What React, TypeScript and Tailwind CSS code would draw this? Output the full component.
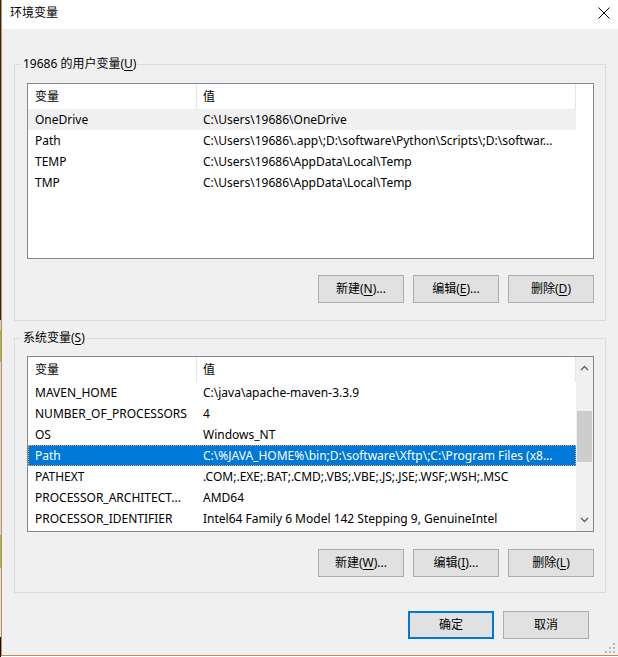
import React from "react";

type Row = { name: string; value: string };

const userRows: Row[] = [
  { name: "OneDrive", value: "C:\\Users\\19686\\OneDrive" },
  {
    name: "Path",
    value: "C:\\Users\\19686\\.app\\;D:\\software\\Python\\Scripts\\;D:\\softwar...",
  },
  { name: "TEMP", value: "C:\\Users\\19686\\AppData\\Local\\Temp" },
  { name: "TMP", value: "C:\\Users\\19686\\AppData\\Local\\Temp" },
];

const systemRows: Row[] = [
  { name: "MAVEN_HOME", value: "C:\\java\\apache-maven-3.3.9" },
  { name: "NUMBER_OF_PROCESSORS", value: "4" },
  { name: "OS", value: "Windows_NT" },
  {
    name: "Path",
    value: "C:\\%JAVA_HOME%\\bin;D:\\software\\Xftp\\;C:\\Program Files (x8...",
  },
  { name: "PATHEXT", value: ".COM;.EXE;.BAT;.CMD;.VBS;.VBE;.JS;.JSE;.WSF;.WSH;.MSC" },
  { name: "PROCESSOR_ARCHITECT...", value: "AMD64" },
  { name: "PROCESSOR_IDENTIFIER", value: "Intel64 Family 6 Model 142 Stepping 9, GenuineIntel" },
];

function Key({ k }: { k: string }) {
  return <span className="underline underline-offset-2">{k}</span>;
}

function WinButton({
  children,
  primary = false,
}: {
  children: React.ReactNode;
  primary?: boolean;
}) {
  return (
    <button
      className={
        "flex h-[28px] w-[86px] items-center justify-center bg-[#e1e1e1] text-[12px] text-black " +
        (primary ? "border-2 border-[#0078d7]" : "border border-[#adadad]")
      }
    >
      {children}
    </button>
  );
}

function Chevron({ up }: { up: boolean }) {
  return (
    <svg width="9" height="6" viewBox="0 0 9 6" className="block">
      <path
        d={up ? "M1 5 L4.5 1.5 L8 5" : "M1 1 L4.5 4.5 L8 1"}
        fill="none"
        stroke="#606060"
        strokeWidth="1.4"
      />
    </svg>
  );
}

function ListView({
  rows,
  selected,
  focused,
  scroll,
}: {
  rows: Row[];
  selected: number;
  focused: boolean;
  scroll?: boolean;
}) {
  return (
    <div className="flex h-[176px] w-[567px] border border-[#828790] bg-white">
      <div className="flex w-[548px] flex-col overflow-hidden">
        <div className="flex h-[25px] shrink-0 items-center">
          <div className="flex h-full w-[169px] items-center border-r border-[#e5e5e5] pl-[7px]">
            变量
          </div>
          <div className="flex h-full flex-1 items-center border-r border-[#e5e5e5] pl-[6px]">
            值
          </div>
        </div>
        {rows.map((r, i) => {
          const sel = i === selected;
          const cls = sel
            ? focused
              ? "bg-[#0078d7] text-white outline-1 outline-dotted outline-[#f0a050] -outline-offset-1"
              : "bg-[#f0f0f0]"
            : "";
          return (
            <div key={r.name + i} className={"flex h-[21px] shrink-0 items-center " + cls}>
              <div className="w-[170px] shrink-0 overflow-hidden whitespace-nowrap pl-[7px]">
                {r.name}
              </div>
              <div className="flex-1 overflow-hidden whitespace-nowrap pl-[5px]">{r.value}</div>
            </div>
          );
        })}
      </div>
      <div className="flex-1" />
      {scroll && (
        <div className="flex w-[17px] flex-col items-center bg-[#f0f0f0]">
          <div className="flex h-[22px] items-center justify-center">
            <Chevron up />
          </div>
          <div className="h-[32px]" />
          <div className="h-[51px] w-[15px] bg-[#cdcdcd]" />
          <div className="flex-1" />
          <div className="flex h-[22px] items-center justify-center">
            <Chevron up={false} />
          </div>
        </div>
      )}
    </div>
  );
}

function Group({
  label,
  children,
}: {
  label: React.ReactNode;
  children: React.ReactNode;
}) {
  return (
    <div className="relative ml-[12px] w-[592px] border border-[#dcdcdc] pl-[12px] pr-[11px]">
      <span className="absolute -top-[9px] left-[6px] bg-[#f0f0f0] px-[2px] leading-[16px]">
        {label}
      </span>
      {children}
    </div>
  );
}

export default function App() {
  return (
    <div className="flex h-[657px] w-[618px] overflow-hidden bg-white font-['Segoe_UI','Noto_Sans','Noto_Sans_CJK_SC',sans-serif] text-[12px] text-black">
      <div className="flex w-[1px] shrink-0 flex-col">
        <div className="h-[320px] bg-[#2b2b2b]" />
        <div className="h-[10px] bg-[#d0d0d0]" />
        <div className="h-[32px] bg-[#8bc34a]" />
        <div className="h-[173px] bg-[#d8d8d8]" />
        <div className="h-[33px] bg-[#8bc34a]" />
        <div className="h-[69px] bg-[#e0e0e0]" />
        <div className="flex-1 bg-[#111]" />
      </div>
      <div className="flex h-[656px] w-[617px] flex-col border-b border-l border-[#c48a57] bg-[#f0f0f0]">
        <div className="flex h-[29px] shrink-0 items-center justify-between bg-white pl-[8px] pr-[8px]">
          <span className="-mt-[3px]">环境变量</span>
          <svg width="12" height="12" viewBox="0 0 12 12" className="-mt-[3px]">
            <path d="M0.5 0.5 L11.5 11.5 M11.5 0.5 L0.5 11.5" stroke="#000" strokeWidth="1" />
          </svg>
        </div>

        <div className="mt-[35px]">
          <Group
            label={
              <>
                19686 的用户变量(<Key k="U" />)
              </>
            }
          >
            <div className="pt-[18px]">
              <ListView rows={userRows} selected={0} focused={false} />
            </div>
            <div className="mt-[16px] flex justify-end gap-[9px] pb-[17px]">
              <WinButton>
                新建(<Key k="N" />)...
              </WinButton>
              <WinButton>
                编辑(<Key k="E" />)...
              </WinButton>
              <WinButton>
                删除(<Key k="D" />)
              </WinButton>
            </div>
          </Group>
        </div>

        <div className="mt-[17px]">
          <Group
            label={
              <>
                系统变量(<Key k="S" />)
              </>
            }
          >
            <div className="pt-[17px]">
              <ListView rows={systemRows} selected={3} focused scroll />
            </div>
            <div className="mt-[17px] flex justify-end gap-[9px] pb-[15px]">
              <WinButton>
                新建(<Key k="W" />)...
              </WinButton>
              <WinButton>
                编辑(<Key k="I" />)...
              </WinButton>
              <WinButton>
                删除(<Key k="L" />)
              </WinButton>
            </div>
          </Group>
        </div>

        <div className="mt-[18px] flex justify-end gap-[9px] pr-[29px]">
          <WinButton primary>确定</WinButton>
          <WinButton>取消</WinButton>
        </div>

        <div className="flex flex-1 items-end justify-end pb-[1px] pr-[2px]">
          <svg width="11" height="11" viewBox="0 0 11 11" className="block">
            <g fill="#b8b8b8">
              <rect x="8" y="0" width="2" height="2" />
              <rect x="4" y="4" width="2" height="2" />
              <rect x="8" y="4" width="2" height="2" />
              <rect x="0" y="8" width="2" height="2" />
              <rect x="4" y="8" width="2" height="2" />
              <rect x="8" y="8" width="2" height="2" />
            </g>
          </svg>
        </div>
      </div>
    </div>
  );
}
